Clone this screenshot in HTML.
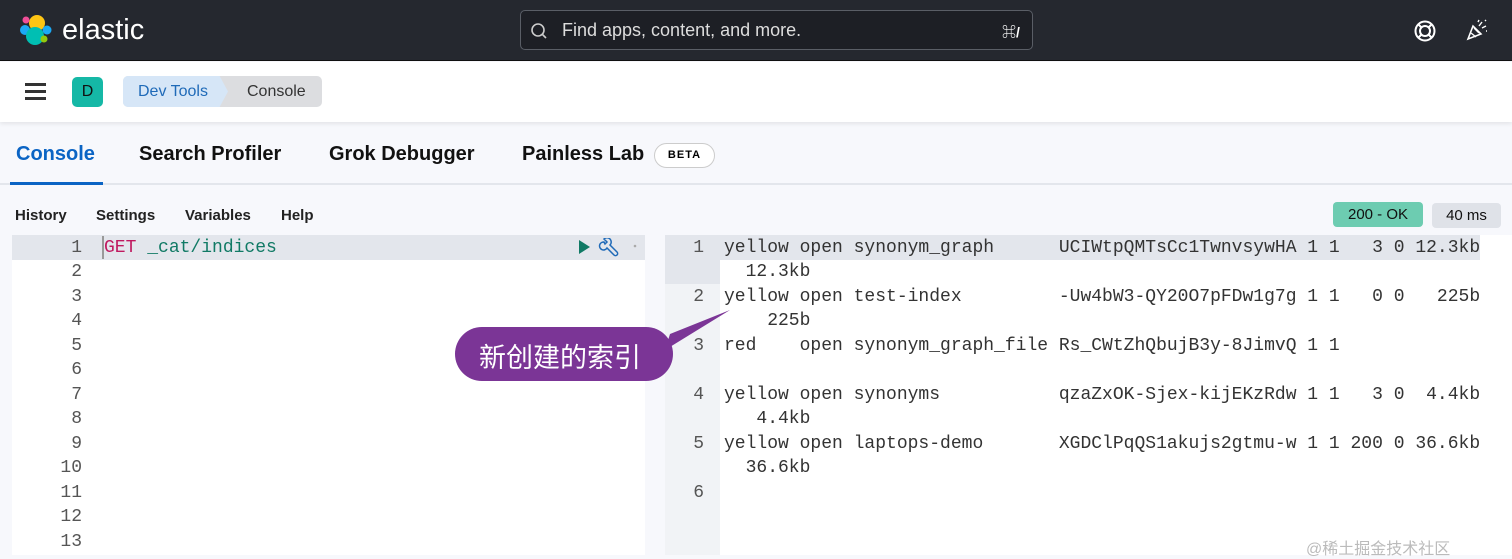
<!DOCTYPE html>
<html><head><meta charset="utf-8"><style>
*{margin:0;padding:0;box-sizing:border-box}
body{width:1512px;height:555px;overflow:hidden;background:#f7f8fc;font-family:"Liberation Sans","Noto Sans CJK SC",sans-serif;position:relative}
.abs{position:absolute}
.mono{font-family:"Liberation Mono","DejaVu Sans Mono",monospace;font-size:18px}
.ln{position:absolute;width:70px;text-align:right;color:#555;font-size:18px}
.rl{position:absolute;left:724px;white-space:pre;color:#333}
</style></head><body>
<div class="abs" style="left:0;top:0;width:1512px;height:61px;background:#25282f;border-bottom:1px solid #111"></div>
<svg class="abs" style="left:19px;top:13px" width="34" height="34" viewBox="0 0 34 34">
<circle cx="18" cy="10" r="8" fill="#fec514"/><circle cx="7" cy="7" r="3.5" fill="#f04e98"/>
<circle cx="6" cy="17" r="5" fill="#1ba9f5"/><circle cx="16" cy="23" r="9" fill="#00bfb3"/>
<circle cx="28" cy="17" r="4.5" fill="#1ba9f5"/><circle cx="25" cy="26" r="3.5" fill="#93c90e"/></svg>
<div class="abs" style="left:62px;top:14px;color:#fff;font-size:29px">elastic</div>
<div class="abs" style="left:520px;top:10px;width:513px;height:40px;border:1px solid #5a5e66;border-radius:5px;background:#1d1f25"></div>
<svg class="abs" style="left:530px;top:22px" width="18" height="18"><circle cx="8" cy="8" r="6" stroke="#ccc" stroke-width="1.6" fill="none"/><path d="M12.5 12.5L16 16" stroke="#ccc" stroke-width="1.6"/></svg>
<div class="abs" style="left:562px;top:20px;color:#ddd;font-size:18px">Find apps, content, and more.</div>
<div class="abs" style="left:1002px;top:22px;color:#fff;font-size:14px;font-weight:bold">⌘/</div>
<svg class="abs" style="left:1413px;top:19px" width="24" height="24"><circle cx="12" cy="12" r="9.5" stroke="#fff" stroke-width="2" fill="none"/><circle cx="12" cy="12" r="5" stroke="#fff" stroke-width="2" fill="none"/><path d="M5 5L8.5 8.5M19 5L15.5 8.5M5 19L8.5 15.5M19 19L15.5 15.5" stroke="#fff" stroke-width="2"/></svg>
<svg class="abs" style="left:1465px;top:18px" width="24" height="24"><path d="M3 21L8 8L16 16Z" stroke="#fff" stroke-width="1.6" fill="none"/><path d="M6 15L11 19M9 10L14 15" stroke="#fff" stroke-width="1.4"/><path d="M14 8L17 4M17 10L21 8M13 4L14 2M20 3L21 2M21 13L22 13" stroke="#fff" stroke-width="1.4"/></svg>
<div class="abs" style="left:0;top:62px;width:1512px;height:60px;background:#fff;box-shadow:0 2px 4px rgba(0,0,0,.08)"></div>
<div class="abs" style="left:25px;top:83px;width:21px;height:2.5px;background:#333;box-shadow:0 7px 0 #333,0 14px 0 #333"></div>
<div class="abs" style="left:72px;top:77px;width:31px;height:30px;border-radius:5px;background:#15b8a6;color:#111;font-size:16px;text-align:center;line-height:30px">D</div>
<div class="abs" style="left:123px;top:76px;width:199px;height:31px;border-radius:5px;background:#dcdde0"></div>
<div class="abs" style="left:123px;top:76px;width:105px;height:31px;border-radius:5px 0 0 5px;background:#d6e6f7;clip-path:polygon(0 0,92% 0,100% 50%,92% 100%,0 100%)"></div>
<div class="abs" style="left:138px;top:83px;color:#1f6ab8;font-size:16px">Dev Tools</div>
<div class="abs" style="left:247px;top:83px;color:#333;font-size:16px">Console</div>
<div class="abs" style="left:0;top:183px;width:1512px;height:2px;background:#e3e6ec"></div>
<div class="abs" style="left:10px;top:182px;width:93px;height:3px;background:#0b64c4"></div>
<div class="abs" style="left:16px;top:143px;font-size:20px;font-weight:bold;color:#0b64c4">Console</div>
<div class="abs" style="left:139px;top:143px;font-size:20px;font-weight:bold;color:#111">Search Profiler</div>
<div class="abs" style="left:329px;top:143px;font-size:20px;font-weight:bold;color:#111">Grok Debugger</div>
<div class="abs" style="left:522px;top:143px;font-size:20px;font-weight:bold;color:#111">Painless Lab</div>
<div class="abs" style="left:654px;top:143px;width:61px;height:25px;border:1px solid #ccc;border-radius:13px;background:#fff;font-size:11px;font-weight:bold;text-align:center;line-height:23px;letter-spacing:1px">BETA</div>
<div class="abs" style="left:15px;top:207px;font-size:15px;font-weight:bold;color:#222">History</div>
<div class="abs" style="left:96px;top:207px;font-size:15px;font-weight:bold;color:#222">Settings</div>
<div class="abs" style="left:185px;top:207px;font-size:15px;font-weight:bold;color:#222">Variables</div>
<div class="abs" style="left:281px;top:207px;font-size:15px;font-weight:bold;color:#222">Help</div>
<div class="abs" style="left:1333px;top:202px;width:90px;height:25px;border-radius:4px;background:#6dccb1;font-size:15px;text-align:center;line-height:25px;color:#111">200 - OK</div>
<div class="abs" style="left:1432px;top:203px;width:69px;height:25px;border-radius:4px;background:#dfe2e8;font-size:15px;text-align:center;line-height:25px;color:#111">40 ms</div>
<div class="abs" style="left:12px;top:235px;width:86px;height:320px;background:#fff"></div>
<div class="abs" style="left:98px;top:235px;width:547px;height:320px;background:#fff"></div>
<div class="abs" style="left:12px;top:235px;width:633px;height:25px;background:#e3e6ec"></div>
<div class="abs" style="left:102px;top:236px;width:2px;height:23px;background:#999"></div>
<div class="abs" style="left:665px;top:235px;width:55px;height:320px;background:#f1f3f6"></div>
<div class="abs" style="left:720px;top:235px;width:792px;height:320px;background:#fff"></div>
<div class="abs" style="left:665px;top:235px;width:55px;height:49px;background:#e3e6ec"></div>
<div class="abs" style="left:720px;top:235px;width:760px;height:25px;background:#e3e6ec"></div>
<div class="mono">
<div class="ln" style="left:12px;top:238px">1</div><div class="ln" style="left:12px;top:262px">2</div><div class="ln" style="left:12px;top:287px">3</div><div class="ln" style="left:12px;top:311px">4</div><div class="ln" style="left:12px;top:336px">5</div><div class="ln" style="left:12px;top:360px">6</div><div class="ln" style="left:12px;top:385px">7</div><div class="ln" style="left:12px;top:409px">8</div><div class="ln" style="left:12px;top:434px">9</div><div class="ln" style="left:12px;top:458px">10</div><div class="ln" style="left:12px;top:483px">11</div><div class="ln" style="left:12px;top:507px">12</div><div class="ln" style="left:12px;top:532px">13</div>
<div class="abs" style="left:104px;top:238px;white-space:pre"><span style="color:#c0195f">GET</span> <span style="color:#117a65">_cat/indices</span></div>
<div class="ln" style="left:634px;top:238px">1</div><div class="ln" style="left:634px;top:287px">2</div><div class="ln" style="left:634px;top:336px">3</div><div class="ln" style="left:634px;top:385px">4</div><div class="ln" style="left:634px;top:434px">5</div><div class="ln" style="left:634px;top:483px">6</div>
<div class="rl" style="top:238px">yellow open synonym_graph      UCIWtpQMTsCc1TwnvsywHA 1 1   3 0 12.3kb</div>
<div class="rl" style="top:262px">  12.3kb</div>
<div class="rl" style="top:287px">yellow open test-index         -Uw4bW3-QY20O7pFDw1g7g 1 1   0 0   225b</div>
<div class="rl" style="top:311px">    225b</div>
<div class="rl" style="top:336px">red    open synonym_graph_file Rs_CWtZhQbujB3y-8JimvQ 1 1</div>
<div class="rl" style="top:385px">yellow open synonyms           qzaZxOK-Sjex-kijEKzRdw 1 1   3 0  4.4kb</div>
<div class="rl" style="top:409px">   4.4kb</div>
<div class="rl" style="top:434px">yellow open laptops-demo       XGDClPqQS1akujs2gtmu-w 1 1 200 0 36.6kb</div>
<div class="rl" style="top:458px">  36.6kb</div>
</div>
<svg class="abs" style="left:578px;top:238px" width="70" height="20"><path d="M1 2L12 9L1 16Z" fill="#117a65"/><path d="M26 4a4 4 0 1 0 3 6l7 7a2 2 0 0 0 3-3l-7-7a4 4 0 0 0-6-6l3 3-2 2z" stroke="#1f6ab8" stroke-width="1.5" fill="none"/><circle cx="57" cy="8" r="1.3" fill="#aaa"/></svg>
<svg class="abs" style="left:450px;top:300px" width="290" height="90"><path d="M220 34L280 10L215 50Z" fill="#7b3596"/><rect x="5" y="27" width="218" height="54" rx="27" fill="#7b3596"/></svg>
<div class="abs" style="left:479px;top:336px;color:#fff;font-size:27px">新创建的索引</div>
<div class="abs" style="left:1306px;top:535px;color:#bbb;font-size:16px">@稀土掘金技术社区</div>
</body></html>
